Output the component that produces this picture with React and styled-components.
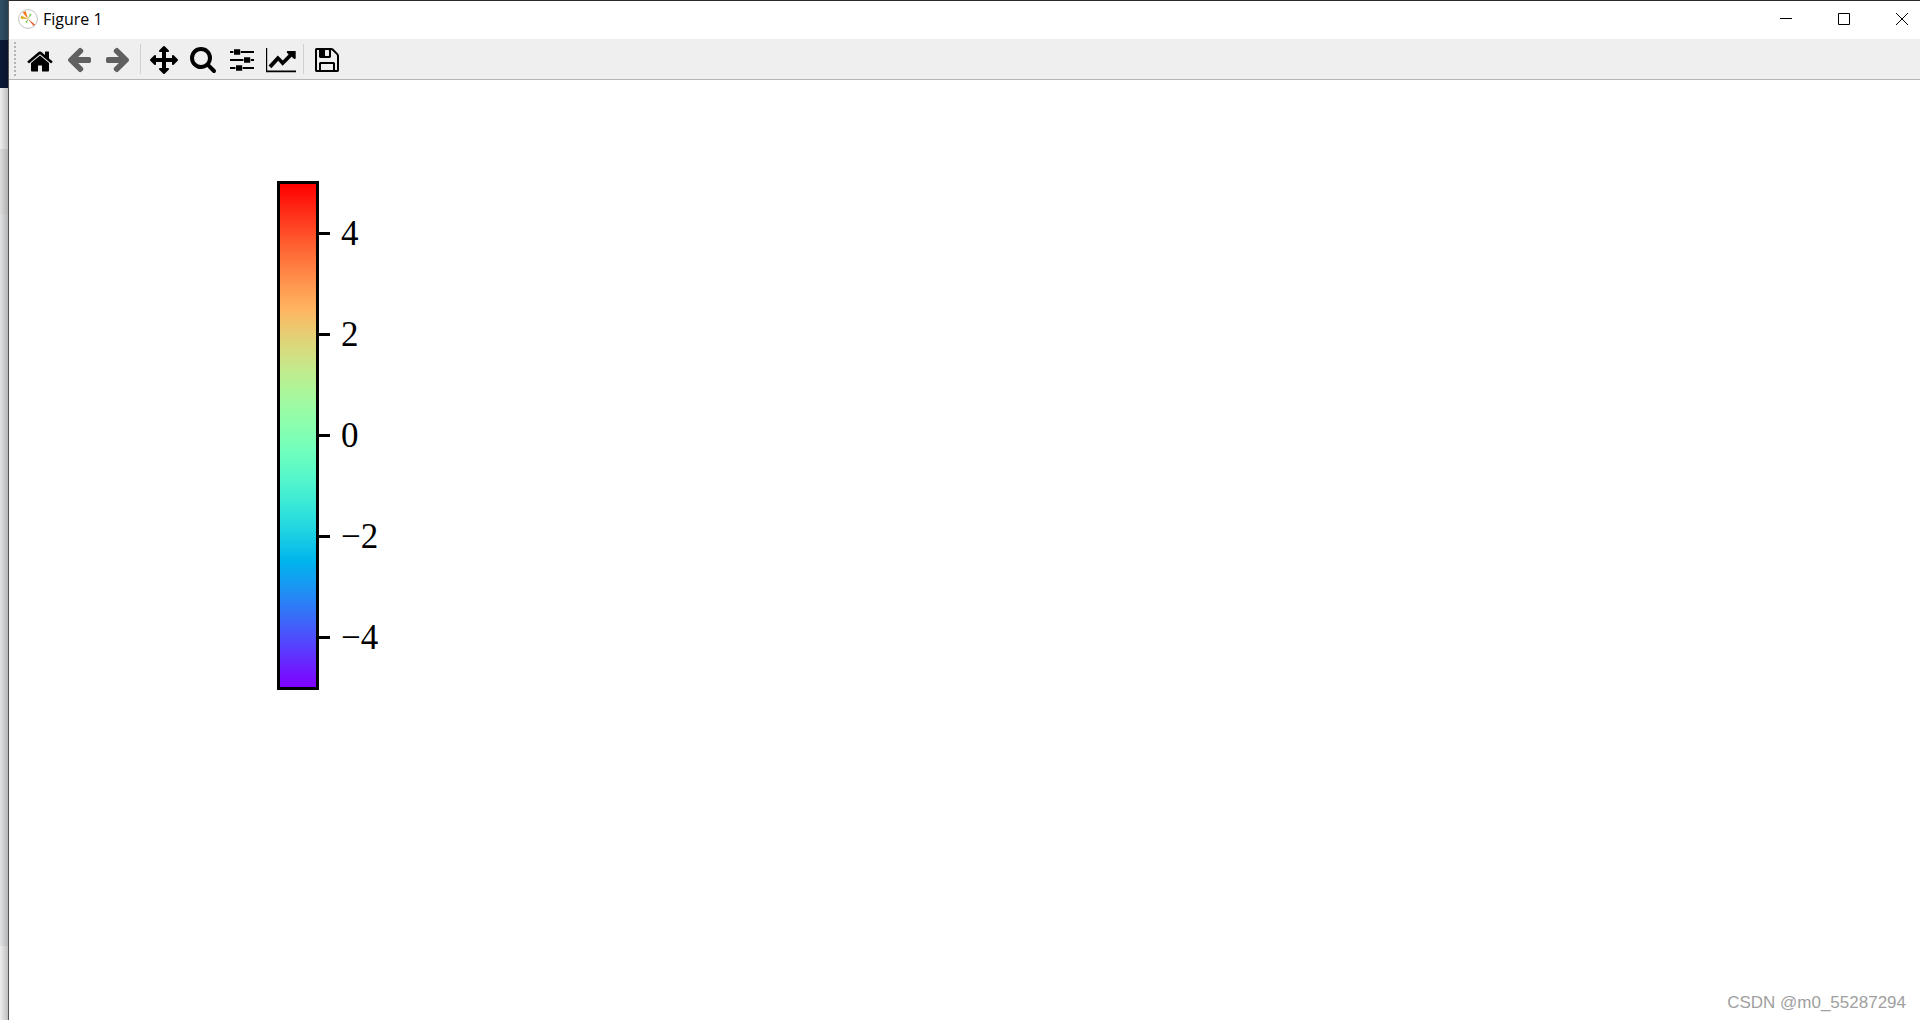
import styled, { createGlobalStyle } from "styled-components";

const ticks = ["4", "2", "0", "−2", "−4"];

// rainbow colormap, sampled from the bottom of the bar to the top
const rainbow = (x) => {
  const r = Math.min(1, Math.abs(2 * x - 0.5));
  const g = Math.sin(Math.PI * x);
  const b = Math.cos((Math.PI * x) / 2);
  return `rgb(${[r, g, b].map((c) => Math.round(c * 255)).join(", ")})`;
};
const rainbowStops = Array.from({ length: 33 }, (_, i) => rainbow(i / 32)).join(", ");

const tools = [
  {
    label: "Home",
    width: 26,
    height: 21,
    box: "0 256 1664 1280",
    path: "M1408 992v480q0 26-19 45t-45 19h-384v-384h-256v384h-384q-26 0-45-19t-19-45v-480q0-1 .5-3t.5-3l575-474 575 474q1 2 1 6zm223-69l-62 74q-8 9-21 11h-3q-13 0-21-7l-692-577-692 577q-12 8-24 7-13-2-21-11l-62-74q-8-10-7-23.5t11-21.5l719-599q32-26 76-26t76 26l244 204v-195q0-14 9-23t23-9h192q14 0 23 9t9 23v408l219 182q10 8 11 21.5t-7 23.5z",
    drop: true,
  },
  {
    label: "Back",
    width: 28,
    height: 28,
    box: "0 64 1792 1792",
    disabled: true,
    path: "M1664 896v128q0 53-32.5 90.5t-84.5 37.5h-704l293 294q38 36 38 90t-38 90l-75 76q-37 37-90 37-52 0-91-37l-651-652q-37-37-37-90 0-52 37-91l651-650q38-38 91-38 52 0 90 38l75 74q38 38 38 91t-38 91l-293 293h704q52 0 84.5 37.5t32.5 90.5z",
  },
  {
    label: "Forward",
    width: 28,
    height: 28,
    box: "0 64 1792 1792",
    disabled: true,
    path: "M1600 960q0 54-37 91l-651 651q-39 37-91 37-51 0-90-37l-75-75q-38-38-38-91t38-91l293-293h-704q-52 0-84.5-37.5t-32.5-90.5v-128q0-53 32.5-90.5t84.5-37.5h704l-293-294q-38-36-38-90t38-90l75-75q38-38 90-38 53 0 91 38l651 651q37 35 37 90z",
  },
  { separator: true },
  {
    label: "Pan",
    width: 28,
    height: 28,
    box: "0 0 1792 1792",
    path: "M1792 896q0 26-19 45l-256 256q-19 19-45 19t-45-19-19-45v-128h-384v384h128q26 0 45 19t19 45-19 45l-256 256q-19 19-45 19t-45-19l-256-256q-19-19-19-45t19-45 45-19h128v-384h-384v128q0 26-19 45t-45 19-45-19l-256-256q-19-19-19-45t19-45l256-256q19-19 45-19t45 19 19 45v128h384v-384h-128q-26 0-45-19t-19-45 19-45l256-256q19-19 45-19t45 19l256 256q19 19 19 45t-19 45-45 19h-128v384h384v-128q0-26 19-45t45-19 45 19l256 256q19 19 19 45z",
  },
  {
    label: "Zoom",
    width: 28,
    height: 28,
    box: "0 64 1792 1792",
    path: "M1216 832q0-185-131.5-316.5t-316.5-131.5-316.5 131.5-131.5 316.5 131.5 316.5 316.5 131.5 316.5-131.5 131.5-316.5zm512 832q0 52-38 90t-90 38q-54 0-90-38l-343-342q-179 124-399 124-143 0-273.5-55.5t-225-150-150-225-55.5-273.5 55.5-273.5 150-225 225-150 273.5-55.5 273.5 55.5 225 150 150 225 55.5 273.5q0 220-124 399l343 343q37 37 37 90z",
  },
  {
    label: "Configure subplots",
    width: 24,
    height: 24,
    box: "0 0 24 24",
    path: "M0 3h3.4v1.9H0zM10.8 3H24v1.9H10.8zM4 1.2h6.2v5.6H4zM0 11h13.4v1.9H0zM20.8 11H24v1.9h-3.2zM14 9.2h6.2v5.6H14zM0 19h5.4v1.9H0zM12.8 19H24v1.9H12.8zM6 17.2h6.2v5.6H6z",
  },
  {
    label: "Edit axis",
    width: 30,
    height: 26,
    box: "0 0 30 26",
    path: "M0 1h1.2v22.6H30v1.7H0zM2.6 18.4l9.2-10 5 5.2 5.8-6-1.8-2.2q-.2-1.4 1-1.4h7.9v7.6q-1 .8-2-.2l-2.1-1.6-9 9-4.4-5-6.8 7.4z",
  },
  { separator: true },
  {
    label: "Save",
    width: 24,
    height: 24,
    box: "128 128 1536 1536",
    path: "M512 1536h768v-384h-768v384zm896 0h128v-896q0-14-10-38.5t-20-34.5l-281-281q-10-10-34-20t-39-10v416q0 40-28 68t-68 28h-576q-40 0-68-28t-28-68v-416h-128v1280h128v-416q0-40 28-68t68-28h832q40 0 68 28t28 68v416zm-384-928v-320q0-13-9.5-22.5t-22.5-9.5h-192q-13 0-22.5 9.5t-9.5 22.5v320q0 13 9.5 22.5t22.5 9.5h192q13 0 22.5-9.5t9.5-22.5zm640 32v928q0 40-28 68t-68 28h-1344q-40 0-68-28t-28-68v-1344q0-40 28-68t68-28h928q40 0 88 20t76 48l280 280q28 28 48 76t20 88z",
  },
];

const FigureLogo = () => (
  <svg width="20" height="20" viewBox="0 0 20 20" aria-hidden="true">
    <circle cx="10" cy="10" r="9.4" fill="#fff" stroke="#c0c0c0" />
    <path d="M10 10 4.6 3.4 7.6 2z" fill="#f07818" />
    <path d="M10 10 2.6 9.8 3.2 6.6z" fill="#e0a820" />
    <path d="M9.6 9.6 15.6 17 17 15.6z" fill="#e8602c" />
    <path d="M10 10 11.8 4.6 14 5.8z" fill="#98d070" />
    <path d="M10 10 7.2 13 9.2 14.4z" fill="#88c858" />
  </svg>
);

const App = () => {
  return (
    <>
      <GlobalStyle />
      <Desktop>
        <Backdrop aria-hidden="true">
          <Stripe $height="40px" $color="#304f65" />
          <Stripe $height="48px" $color="#0c1838" />
          <Stripe $height="61px" $color="#eeeeee" />
          <Stripe $height="65px" $color="#dddddd" />
          <Stripe $color="#e0e3e5" />
          <Stripe $height="74px" $color="#eeeeee" />
        </Backdrop>
        <Window>
          <TitleBar>
            <FigureLogo />
            <Title>Figure 1</Title>
            <WindowButton aria-label="Minimize">
              <ControlIcon>
                <path d="M0 5.5h12" />
              </ControlIcon>
            </WindowButton>
            <WindowButton aria-label="Maximize">
              <ControlIcon>
                <path d="M.5.5h11v11H.5z" />
              </ControlIcon>
            </WindowButton>
            <WindowButton aria-label="Close">
              <ControlIcon>
                <path d="M0 0l12 12M12 0 0 12" />
              </ControlIcon>
            </WindowButton>
          </TitleBar>
          <Toolbar>
            <Handle />
            {tools.map((tool, i) =>
              tool.separator ? (
                <Separator key={i} />
              ) : (
                <ToolButton
                  key={i}
                  aria-label={tool.label}
                  disabled={tool.disabled}
                  $drop={tool.drop}
                >
                  <svg width={tool.width} height={tool.height} viewBox={tool.box}>
                    <path d={tool.path} />
                  </svg>
                </ToolButton>
              )
            )}
          </Toolbar>
          <Canvas>
            <ColorBar />
            <Axis>
              {ticks.map((tick) => (
                <Tick key={tick}>{tick}</Tick>
              ))}
            </Axis>
            <Watermark>CSDN @m0_55287294</Watermark>
          </Canvas>
        </Window>
      </Desktop>
    </>
  );
};

export default App;

const GlobalStyle = createGlobalStyle`
  * {
    box-sizing: border-box;
  }
  body {
    margin: 0;
    overflow: hidden;
    background-color: white;
  }
`;

const Desktop = styled.div`
  display: flex;
  height: 100vh;
  overflow: hidden;
`;

const Backdrop = styled.div`
  display: flex;
  flex-direction: column;
  flex: none;
  width: 8px;
`;

const Stripe = styled.div`
  flex: ${(props) => (props.$height ? "none" : 1)};
  height: ${(props) => props.$height};
  background-color: ${(props) => props.$color};
  background-image: linear-gradient(to right, transparent, rgba(0, 0, 0, 0.2));
`;

const Window = styled.main`
  display: flex;
  flex-direction: column;
  flex: 1;
  min-width: 0;
  border-top: 1px solid #2b2b2b;
  border-left: 1px solid #505655;
  background-color: white;
`;

const TitleBar = styled.header`
  display: flex;
  align-items: center;
  height: 38px;
  margin-right: -12px;
  padding: 0 1px 2px 9px;
`;

const Title = styled.h1`
  flex: 1;
  margin: 0 0 0 5px;
  font-family: "Open Sans", sans-serif;
  font-size: 16px;
  font-weight: 400;
  line-height: 20px;
  color: black;
`;

const WindowButton = styled.button`
  display: flex;
  align-items: center;
  justify-content: center;
  width: 58px;
  height: 100%;
  padding: 0;
  border: none;
  background: none;
`;

const ControlIcon = styled.svg.attrs({ viewBox: "0 0 12 12" })`
  width: 12px;
  height: 12px;
  fill: none;
  stroke: black;
`;

const Toolbar = styled.div`
  display: flex;
  align-items: center;
  height: 41px;
  padding-left: 5px;
  border-bottom: 1px solid #b6b6b6;
  background-color: #efefef;
`;

const Handle = styled.div`
  width: 2px;
  height: 34px;
  margin-right: 4px;
  background: repeating-linear-gradient(#b4b4b4 0 2px, transparent 2px 4px);
`;

const ToolButton = styled.button`
  display: flex;
  align-items: center;
  justify-content: center;
  width: 39px;
  height: 100%;
  padding: ${(props) => (props.$drop ? "4px 0 0" : "1px 0 0")};
  border: none;
  background: none;
  fill: ${(props) => (props.disabled ? "#606060" : "black")};
`;

const Separator = styled.div`
  width: 1px;
  height: 30px;
  margin: 0 3px;
  background-color: #d0d0d0;
`;

const Canvas = styled.section`
  position: relative;
  display: flex;
  flex: 1;
  align-items: flex-start;
  padding: 101px 0 0 268px;
`;

const ColorBar = styled.div`
  width: 42px;
  height: 509px;
  border: 3px solid black;
  background: linear-gradient(to top, ${rainbowStops}) padding-box;
`;

const Axis = styled.ul`
  display: flex;
  flex-direction: column;
  justify-content: center;
  height: 509px;
  margin: 0;
  padding: 0;
  list-style: none;
`;

const Tick = styled.li`
  display: flex;
  align-items: center;
  height: 101px;
  font-family: "Liberation Serif", serif;
  font-size: 35px;
  line-height: 40px;
  color: black;

  &::before {
    content: "";
    width: 11px;
    height: 3px;
    margin-right: 11px;
    background-color: black;
  }
`;

const Watermark = styled.div`
  position: absolute;
  right: 14px;
  bottom: 7px;
  font-family: "Liberation Sans", sans-serif;
  font-size: 17px;
  line-height: 20px;
  color: #a0a0a0;
`;
